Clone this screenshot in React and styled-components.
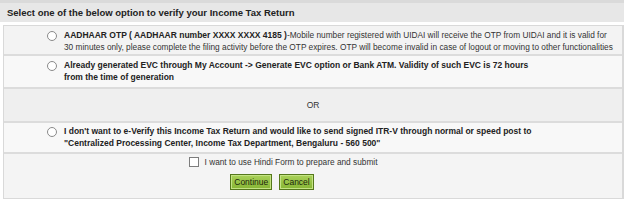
import styled, { createGlobalStyle } from 'styled-components'

const Global = createGlobalStyle`
    body {
        margin: 0;
        background: #ffffff;
        font-family: "Liberation Sans", Arial, sans-serif;
    }
`

const Panel = styled.div`
    width: 624px;
    background: #ffffff;
`

const Heading = styled.div`
    background: #e7e7e7;
    border-top: 3px solid #dadada;
    height: 19px;
    padding-left: 7px;
    display: flex;
    align-items: center;
    font-size: 9.5px;
    font-weight: bold;
    color: #222;
    margin-bottom: 3px;
`

const Table = styled.div`
    margin-left: 3px;
    border: 1px solid #d9d9d9;
    border-right-width: 2px;
    display: flex;
    flex-direction: column;
`

const Option = styled.label`
    display: flex;
    align-items: flex-start;
    gap: 7px;
    padding: ${p => p.$pad || '4px'} 0 0 43px;
    height: ${p => p.$h}px;
    box-sizing: border-box;
    background: ${p => p.$bg || '#f3f3f3'};
    border-bottom: 2px solid #dcdcdc;
    font-size: 8.3px;
    line-height: 11.5px;
    color: #333;
    white-space: nowrap;
`

const Radio = styled.span`
    flex: none;
    width: 8px;
    height: 8px;
    margin-top: 1px;
    border: 1px solid #8a8a8a;
    border-radius: 50%;
    background: #fff;
`

const Text = styled.div`
    b {
        color: #222;
        font-size: 8.5px;
    }
`

const OrRow = styled.div`
    height: 32px;
    display: flex;
    align-items: center;
    justify-content: center;
    background: #efefef;
    border-bottom: 2px solid #dcdcdc;
    font-size: 8.5px;
    color: #333;
`

const Footer = styled.div`
    height: 44px;
    display: flex;
    flex-direction: column;
    align-items: center;
    padding: 3px 60px 0 0;
    box-sizing: border-box;
    background: #f4f4f4;
`

const CheckRow = styled.label`
    display: flex;
    align-items: center;
    gap: 6px;
    font-size: 8.3px;
    color: #333;
`

const Box = styled.span`
    width: 8px;
    height: 8px;
    border: 1px solid #7d7d7d;
    background: #fff;
`

const Buttons = styled.div`
    display: flex;
    gap: 7px;
    margin: 7px 22px 0 0;
`

const Button = styled.button`
    height: 16px;
    padding: 0 3px;
    border: 1px solid #55781c;
    background: linear-gradient(#aad25a, #86b534);
    font-family: "Liberation Sans", Arial, sans-serif;
    font-size: 8.5px;
    color: #1b260b;
    box-shadow: inset 0 0 0 1px #c4e384;
`

const App = () => {
    return (
        <Panel>
            <Global />
            <Heading>Select one of the below option to verify your Income Tax Return</Heading>
            <Table>
                <Option $h={30}>
                    <Radio />
                    <Text>
                        <b>AADHAAR OTP ( AADHAAR number XXXX XXXX 4185 )</b>-Mobile number registered with UIDAI will receive the OTP from UIDAI and it is valid for
                        <br />
                        30 minutes only, please complete the filing activity before the OTP expires. OTP will become invalid in case of logout or moving to other functionalities
                    </Text>
                </Option>
                <Option $h={33} $bg="#f8f8f8" $pad="4px">
                    <Radio />
                    <Text>
                        <b>Already generated EVC through My Account -&gt; Generate EVC option or Bank ATM. Validity of such EVC is 72 hours
                        <br />
                        from the time of generation</b>
                    </Text>
                </Option>
                <OrRow>OR</OrRow>
                <Option $h={31} $bg="#f8f8f8" $pad="3px">
                    <Radio />
                    <Text>
                        <b>I don't want to e-Verify this Income Tax Return and would like to send signed ITR-V through normal or speed post to
                        <br />
                        "Centralized Processing Center, Income Tax Department, Bengaluru - 560 500"</b>
                    </Text>
                </Option>
                <Footer>
                    <CheckRow>
                        <Box />
                        I want to use Hindi Form to prepare and submit
                    </CheckRow>
                    <Buttons>
                        <Button>Continue</Button>
                        <Button>Cancel</Button>
                    </Buttons>
                </Footer>
            </Table>
        </Panel>
    )
}

export default App
